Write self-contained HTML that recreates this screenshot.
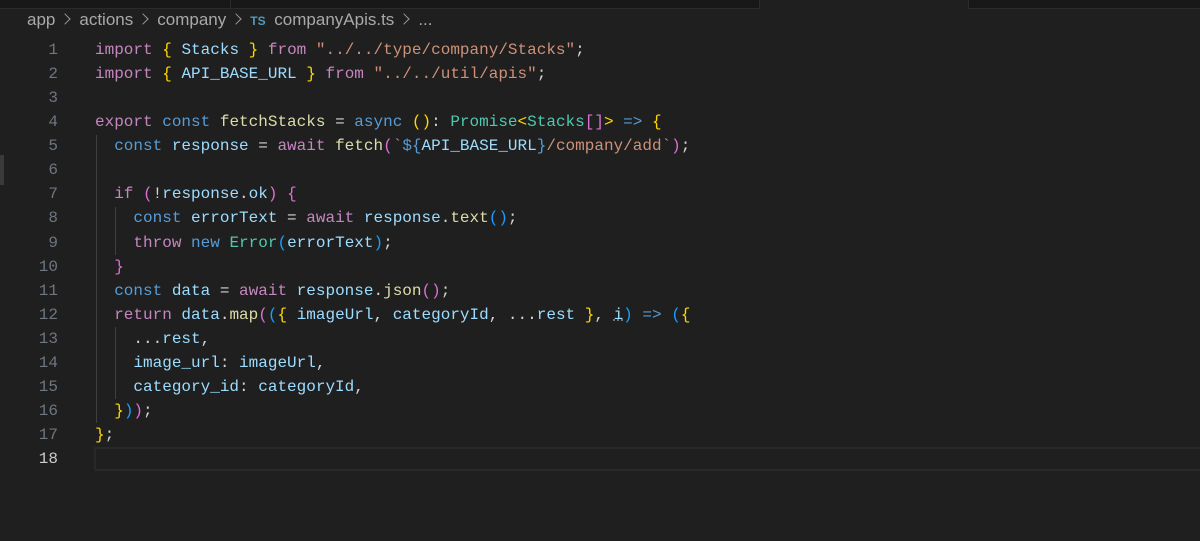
<!DOCTYPE html>
<html><head><meta charset="utf-8"><style>
body{margin:0;width:1200px;height:541px;background:#1f1f1f;overflow:hidden;position:relative;font-family:"Liberation Sans",sans-serif}
.tab1{position:absolute;top:0;left:0;width:759px;height:8px;background:#181818;border-bottom:1px solid #2b2b2b;border-right:1px solid #2b2b2b}
.div{position:absolute;top:0;left:230px;width:1px;height:8px;background:#2b2b2b}
.tab2{position:absolute;top:0;left:968px;width:232px;height:8px;background:#181818;border-bottom:1px solid #2b2b2b;border-left:1px solid #2b2b2b}
.bc{position:absolute;top:10px;left:27px;font-size:17px;color:#a9a9a9;white-space:pre;line-height:20px}
.bc .ts{color:#519aba;font-size:12px;font-weight:bold;margin:0 4px 0 0}
.bc .s{display:inline-block;width:7px;height:7px;border-top:1.5px solid #999;border-right:1.5px solid #999;transform:rotate(45deg);margin:0 10px 2px 6px}
.ln{position:absolute;left:0;width:58px;text-align:right;font-family:"Liberation Mono",monospace;font-size:16px;color:#6e7681;line-height:24px}
.code{position:absolute;left:95px;top:38px;font-family:"Liberation Mono",monospace;font-size:16px;line-height:24.06px;white-space:pre;color:#d4d4d4}
.k{color:#c586c0}.b{color:#569cd6}.v{color:#9cdcfe}.f{color:#dcdcaa}.s1{color:#ce9178}.t{color:#4ec9b0}
.g{color:#ffd700}.p{color:#da70d6}.c{color:#179fff}
.guide{position:absolute;width:1px;background:#404040}
.cur{position:absolute;left:94px;top:447px;width:1110px;height:20px;border:2px solid #282828}
.mark{position:absolute;left:0;top:155px;width:4px;height:30px;background:#3a3a3a}
</style></head><body>
<div class="tab1"></div><div class="div"></div><div class="tab2"></div>
<div class="bc">app<span class="s"></span>actions<span class="s"></span>company<span class="s"></span><span class="ts">TS</span> companyApis.ts<span class="s"></span>...</div>
<div class="mark"></div>
<div class="ln" style="top:38px;line-height:24.06px">1<br>2<br>3<br>4<br>5<br>6<br>7<br>8<br>9<br>10<br>11<br>12<br>13<br>14<br>15<br>16<br>17<br><span style="color:#ccc">18</span></div>
<div class="guide" style="left:96px;top:135px;height:288px"></div>
<div class="guide" style="left:115px;top:207px;height:48px"></div>
<div class="guide" style="left:115px;top:327px;height:72px"></div>
<div class="cur"></div>
<div class="code"><span class="k">import</span> <span class="g">{</span> <span class="v">Stacks</span> <span class="g">}</span> <span class="k">from</span> <span class="s1">"../../type/company/Stacks"</span>;
<span class="k">import</span> <span class="g">{</span> <span class="v">API_BASE_URL</span> <span class="g">}</span> <span class="k">from</span> <span class="s1">"../../util/apis"</span>;

<span class="k">export</span> <span class="b">const</span> <span class="f">fetchStacks</span> = <span class="b">async</span> <span class="g">()</span>: <span class="t">Promise</span><span class="g">&lt;</span><span class="t">Stacks</span><span class="p">[]</span><span class="g">&gt;</span> <span class="b">=&gt;</span> <span class="g">{</span>
  <span class="b">const</span> <span class="v">response</span> = <span class="k">await</span> <span class="f">fetch</span><span class="p">(</span><span class="s1">`</span><span class="b">${</span><span class="v">API_BASE_URL</span><span class="b">}</span><span class="s1">/company/add`</span><span class="p">)</span>;

  <span class="k">if</span> <span class="p">(</span>!<span class="v">response</span>.<span class="v">ok</span><span class="p">)</span> <span class="p">{</span>
    <span class="b">const</span> <span class="v">errorText</span> = <span class="k">await</span> <span class="v">response</span>.<span class="f">text</span><span class="c">()</span>;
    <span class="k">throw</span> <span class="b">new</span> <span class="t">Error</span><span class="c">(</span><span class="v">errorText</span><span class="c">)</span>;
  <span class="p">}</span>
  <span class="b">const</span> <span class="v">data</span> = <span class="k">await</span> <span class="v">response</span>.<span class="f">json</span><span class="p">()</span>;
  <span class="k">return</span> <span class="v">data</span>.<span class="f">map</span><span class="p">(</span><span class="c">(</span><span class="g">{</span> <span class="v">imageUrl</span>, <span class="v">categoryId</span>, ...<span class="v">rest</span> <span class="g">}</span>, <span class="v" style="text-decoration:underline dotted #888">i</span><span class="c">)</span> <span class="b">=&gt;</span> <span class="c">(</span><span class="g">{</span>
    ...<span class="v">rest</span>,
    <span class="v">image_url</span>: <span class="v">imageUrl</span>,
    <span class="v">category_id</span>: <span class="v">categoryId</span>,
  <span class="g">}</span><span class="c">)</span><span class="p">)</span>;
<span class="g">}</span>;
</div>
</body></html>
